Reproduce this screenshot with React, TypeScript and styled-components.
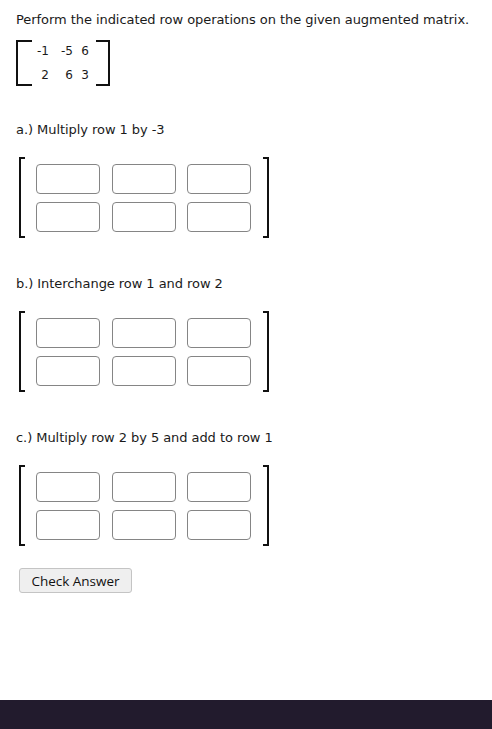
import React from 'react'
import styled, { createGlobalStyle } from 'styled-components'

const GlobalStyle = createGlobalStyle`
  html, body {
    margin: 0;
    padding: 0;
    background: #ffffff;
  }
  body {
    font-family: 'DejaVu Sans', Verdana, sans-serif;
    color: #1a1a1a;
  }
`

const Page = styled.div`
  min-height: 100vh;
  display: flex;
  flex-direction: column;
`

const Content = styled.div`
  flex: 1;
  padding: 12px 16px 0 16px;
`

const Prompt = styled.p`
  margin: 0;
  font-size: 13px;
  line-height: 16px;
  letter-spacing: -0.06px;
`

const Given = styled.div`
  display: flex;
  margin-top: 12px;
  height: 46px;
  width: fit-content;
`

const Bracket = styled.div<{ side: 'left' | 'right'; tick: number }>`
  box-sizing: border-box;
  width: ${({ tick }) => tick}px;
  border: 2px solid #111;
  border-${({ side }) => (side === 'left' ? 'right' : 'left')}: none;
  flex-shrink: 0;
`

const GivenGrid = styled.div`
  display: grid;
  grid-template-columns: 15px 24px 16px;
  grid-auto-rows: 24px;
  align-content: center;
  padding: 0 7px 0 2px;
  font-size: 12px;
`

const Entry = styled.span`
  text-align: right;
  line-height: 24px;
`

const Step = styled.section<{ gap: number }>`
  margin-top: ${({ gap }) => gap}px;
`

const StepLabel = styled.p`
  margin: 0;
  font-size: 13px;
  line-height: 16px;
  letter-spacing: -0.06px;
`

const Matrix = styled.div`
  display: flex;
  margin: 19px 0 0 3px;
  height: 81px;
  width: fit-content;
`

const InputGrid = styled.div`
  display: grid;
  grid-template-columns: repeat(3, 64px);
  grid-auto-rows: 30px;
  column-gap: 11.5px;
  row-gap: 8px;
  padding: 7px 12px 6px 11px;
`

const Cell = styled.input`
  box-sizing: border-box;
  width: 100%;
  height: 100%;
  border: 1px solid #858585;
  border-radius: 4px;
  background: #fff;
  margin: 0;
  padding: 0 4px;
  font-family: inherit;
  font-size: 13px;
`

const CheckButton = styled.button`
  margin: 22px 0 0 3px;
  width: 113px;
  height: 25px;
  border: 1px solid #c4c4c4;
  border-radius: 3px;
  background: #efefef;
  font-family: 'Open Sans', 'Noto Sans', sans-serif;
  font-size: 13.5px;
  color: #111;
  padding: 0;
  cursor: pointer;
`

const Footer = styled.footer`
  height: 29px;
  background: #221b2d;
`

const given = [
  ['-1', '-5', '6'],
  ['2', '6', '3'],
]

const steps = [
  { label: 'a.) Multiply row 1 by -3', gap: 36 },
  { label: 'b.) Interchange row 1 and row 2', gap: 38 },
  { label: 'c.) Multiply row 2 by 5 and add to row 1', gap: 38 },
]

const AnswerMatrix: React.FC<{ name: string }> = ({ name }) => (
  <Matrix>
    <Bracket side="left" tick={6} />
    <InputGrid>
      {Array.from({ length: 6 }).map((_, i) => (
        <Cell key={i} type="text" aria-label={`${name} entry ${i + 1}`} />
      ))}
    </InputGrid>
    <Bracket side="right" tick={6} />
  </Matrix>
)

const App: React.FC = () => {
  return (
    <Page>
      <GlobalStyle />
      <Content>
        <Prompt>Perform the indicated row operations on the given augmented matrix.</Prompt>
        <Given>
          <Bracket side="left" tick={16} />
          <GivenGrid>
            {given.flat().map((v, i) => (
              <Entry key={i}>{v}</Entry>
            ))}
          </GivenGrid>
          <Bracket side="right" tick={14} />
        </Given>
        {steps.map((s, i) => (
          <Step key={i} gap={s.gap}>
            <StepLabel>{s.label}</StepLabel>
            <AnswerMatrix name={s.label} />
          </Step>
        ))}
        <CheckButton type="button">Check Answer</CheckButton>
      </Content>
      <Footer />
    </Page>
  )
}

export default App
